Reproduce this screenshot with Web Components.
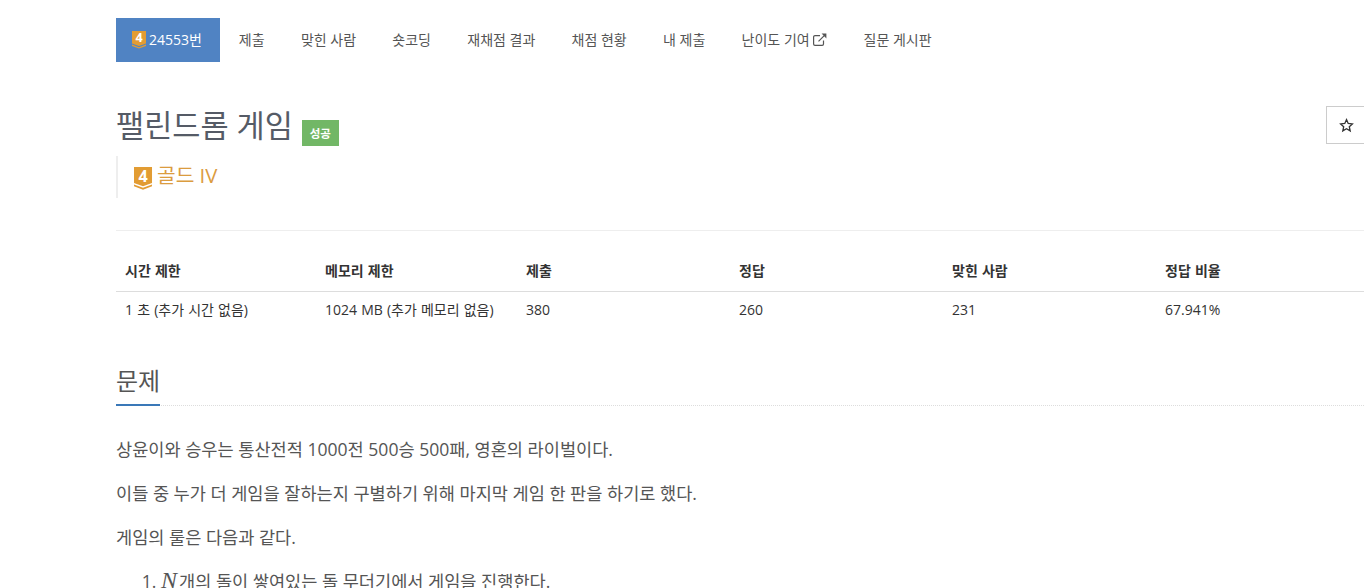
<!DOCTYPE html>
<html lang="ko">
<head>
<meta charset="utf-8">
<title>팰린드롬 게임</title>
<style>
html, body { margin: 0; padding: 0; height: 588px; overflow: hidden; background: #fff; }
body {
  font-family: "Open Sans", "Noto Sans CJK KR", sans-serif;
  font-size: 14px;
  color: #333;
}
problem-text i { font-family: "Liberation Serif", serif; font-size: 24px; line-height: 0; margin-right: 2px; }
</style>
</head>
<body>
<boj-page>
  <boj-nav>
    <boj-tab active><tier-icon size="16" slot="icon"></tier-icon>24553번</boj-tab>
    <boj-tab>제출</boj-tab>
    <boj-tab>맞힌 사람</boj-tab>
    <boj-tab>숏코딩</boj-tab>
    <boj-tab>재채점 결과</boj-tab>
    <boj-tab>채점 현황</boj-tab>
    <boj-tab>내 제출</boj-tab>
    <boj-tab>난이도 기여 <ext-icon></ext-icon></boj-tab>
    <boj-tab>질문 게시판</boj-tab>
  </boj-nav>
  <problem-head></problem-head>
  <info-table></info-table>
  <section-head>문제</section-head>
  <problem-text>
    <p>상윤이와 승우는 통산전적 1000전 500승 500패, 영혼의 라이벌이다.</p>
    <p>이들 중 누가 더 게임을 잘하는지 구별하기 위해 마지막 게임 한 판을 하기로 했다.</p>
    <p>게임의 룰은 다음과 같다.</p>
    <ol><li><i>N</i>개의 돌이 쌓여있는 돌 무더기에서 게임을 진행한다.</li></ol>
  </problem-text>
</boj-page>

<script>
class BojPage extends HTMLElement {
  constructor() {
    super()
    this.attachShadow({ mode: 'open' }).innerHTML = /*html*/`<style>
      :host { display: block; width: 1250px; margin-left: 116px; }
    </style><slot></slot>`
  }
}

class BojNav extends HTMLElement {
  constructor() {
    super()
    this.attachShadow({ mode: 'open' }).innerHTML = /*html*/`<style>
      :host { display: flex; margin-top: 18px; height: 44px; }
    </style><slot></slot>`
  }
}

class BojTab extends HTMLElement {
  constructor() {
    super()
    this.attachShadow({ mode: 'open' }).innerHTML = /*html*/`<style>
      :host {
        display: flex;
        align-items: center;
        padding: 0 18.15px 2px;
        box-sizing: border-box;
        color: #555;
        font-size: 14px;
        white-space: pre;
      }
      :host([active]) {
        background: #5083c3;
        color: #fff;
        padding: 0 18px 2px 16px;
        margin-right: .8px;
      }
      ::slotted(tier-icon) { margin: 2px 3px 0 0; }
    </style><slot name="icon"></slot><slot></slot>`
  }
}

class TierIcon extends HTMLElement {
  constructor() {
    super()
    const size = Number(this.getAttribute('size')) || 16
    this.attachShadow({ mode: 'open' }).innerHTML = /*html*/`<style>
      :host { display: inline-flex; }
      svg { display: block; overflow: visible; }
      text { font-family: "Open Sans", sans-serif; font-weight: 700; fill: #fff; }
    </style>
    <svg width="${size * 0.875}" height="${size * 1.1}" viewBox="0 0 14 17.6">
      <path fill="#e29c33" d="M0 0H14V12.4L7 15 0 12.4Z"/>
      <path fill="#e29c33" d="M0 13.6L7 16.2 14 13.6V15L7 17.6 0 15Z"/>
      <text x="7" y="11.4" font-size="12.5" text-anchor="middle">4</text>
    </svg>`
  }
}

class ExtIcon extends HTMLElement {
  constructor() {
    super()
    this.attachShadow({ mode: 'open' }).innerHTML = /*html*/`<style>
      :host { display: inline-flex; }
    </style>
    <svg width="14" height="13" viewBox="0 0 14 13" fill="none" stroke="#555" stroke-width="1.2">
      <path d="M10.5 7.5V11A1.4 1.4 0 0 1 9.1 12.4H2A1.4 1.4 0 0 1 .6 11V4A1.4 1.4 0 0 1 2 2.6H7"/>
      <path d="M5.5 8.3L12 1.8"/>
      <path fill="#555" stroke="none" d="M8.6.6H13.4V5.4Z"/>
    </svg>`
  }
}

class ProblemHead extends HTMLElement {
  constructor() {
    super()
    this.attachShadow({ mode: 'open' }).innerHTML = /*html*/`<style>
      :host { display: block; margin-top: 43px; }
      .title-row { display: flex; align-items: flex-start; height: 51px; }
      h1 {
        margin: 0;
        font-size: 30.6px;
        line-height: 40px;
        font-weight: 400;
        color: #555b66;
      }
      .label {
        margin: 15px 0 0 9px;
        background: #72b766;
        color: #fff;
        font-size: 11.5px;
        font-weight: 700;
        width: 37px;
        height: 26px;
        display: flex;
        align-items: center;
        justify-content: center;
      }
      .star {
        margin: 1px 0 0 auto;
        box-sizing: border-box;
        width: 40px;
        height: 38px;
        border: 1px solid #ccc;
        display: flex;
        align-items: center;
        padding-left: 12px;
      }
      .tier {
        display: flex;
        align-items: center;
        height: 42px;
        border-left: 2px solid #eee;
        padding-left: 16px;
        color: #db9c3f;
        font-size: 20.3px;
        line-height: 38px;
      }
      .tier span { margin-top: -5px; }
      .tier tier-icon { margin-right: 5px; margin-top: 2px; }
      hr { margin: 32px 0 0; border: 0; border-top: 1px solid #eee; }
    </style>
    <div class="title-row">
      <h1>팰린드롬 게임</h1>
      <span class="label">성공</span>
      <span class="star">
        <svg width="15" height="15" viewBox="0 0 15 15" fill="none" stroke="#333" stroke-width="1.3">
          <path d="M7.5 1.6L9.2 5.4 13.4 5.9 10.3 8.7 11.2 12.9 7.5 10.8 3.8 12.9 4.7 8.7 1.6 5.9 5.8 5.4Z"/>
        </svg>
      </span>
    </div>
    <div class="tier"><tier-icon size="20.6"></tier-icon><span>골드 IV</span></div>
    <hr>`
  }
}

class InfoTable extends HTMLElement {
  constructor() {
    super()
    this.attachShadow({ mode: 'open' }).innerHTML = /*html*/`<style>
      :host { display: block; margin-top: 20px; }
      .row {
        display: grid;
        grid-template-columns: 200px 201px 213px 213px 213px 1fr;
        font-size: 14px;
        word-spacing: .5px;
        color: #333;
      }
      .row > div { padding: 0 9px; white-space: nowrap; }
      .th { height: 40px; line-height: 40px; border-bottom: 1px solid #ddd; font-weight: 700; }
      .td { height: 36px; line-height: 36px; }
    </style>
    <div class="row th">
      <div>시간 제한</div><div>메모리 제한</div><div>제출</div><div>정답</div><div>맞힌 사람</div><div>정답 비율</div>
    </div>
    <div class="row td">
      <div>1 초 (추가 시간 없음)</div><div>1024 MB (추가 메모리 없음)</div><div>380</div><div>260</div><div>231</div><div>67.941%</div>
    </div>`
  }
}

class SectionHead extends HTMLElement {
  constructor() {
    super()
    this.attachShadow({ mode: 'open' }).innerHTML = /*html*/`<style>
      :host { display: block; margin-top: 29px; border-bottom: 1px dotted #ddd; height: 48px; }
      h2 {
        display: inline-block;
        margin: 0;
        box-sizing: border-box;
        height: 49px;
        padding: 9px 0 0;
        font-size: 24px;
        line-height: 30px;
        font-weight: 400;
        color: #555;
        border-bottom: 2px solid #3a78b8;
      }
    </style><h2><slot></slot></h2>`
  }
}

class ProblemText extends HTMLElement {
  constructor() {
    super()
    this.attachShadow({ mode: 'open' }).innerHTML = /*html*/`<style>
      :host { display: block; margin-top: 29px; font-size: 17.57px; line-height: 28px; color: #555; }
      ::slotted(p) { margin: 0 0 16px; }
      ::slotted(ol) { margin: 0; padding-left: 45px; }
    </style><slot></slot>`
  }
}

customElements.define('boj-page', BojPage)
customElements.define('boj-nav', BojNav)
customElements.define('boj-tab', BojTab)
customElements.define('tier-icon', TierIcon)
customElements.define('ext-icon', ExtIcon)
customElements.define('problem-head', ProblemHead)
customElements.define('info-table', InfoTable)
customElements.define('section-head', SectionHead)
customElements.define('problem-text', ProblemText)
</script>
</body>
</html>
